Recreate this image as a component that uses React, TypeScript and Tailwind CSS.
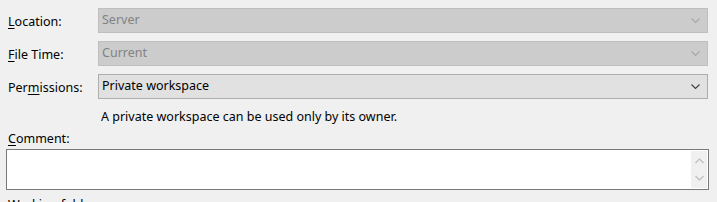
const FONT = "font-['Segoe_UI','Noto_Sans','Open_Sans',sans-serif]";

function Chevron({ disabled }: { disabled?: boolean }) {
  return (
    <svg width="9" height="6" viewBox="0 0 9 6" className="shrink-0">
      <path d="M0.5 0.5 L4.5 4.5 L8.5 0.5" fill="none" stroke={disabled ? "#a6a6a6" : "#404040"} strokeWidth="1.1" />
    </svg>
  );
}

function Combo({ value, disabled }: { value: string; disabled?: boolean }) {
  return (
    <div
      className={
        disabled
          ? "flex h-[25px] items-center justify-between border border-[#bfbfbf] bg-[#cccccc] pl-[3px] pr-[7px] text-[#838383]"
          : "flex h-[25px] items-center justify-between border border-[#adadad] bg-[#e1e1e1] pl-[3px] pr-[7px] text-black"
      }
    >
      <span>{value}</span>
      <Chevron disabled={disabled} />
    </div>
  );
}

function Label({ hot, rest, before }: { hot: string; rest: string; before?: string }) {
  return (
    <span className="mt-[3px]">
      {before}
      <span className="underline underline-offset-2">{hot}</span>
      {rest}
    </span>
  );
}

export default function App() {
  return (
    <div className={`${FONT} h-[202px] w-[717px] overflow-hidden bg-[#f0f0f0] text-[12.5px] text-black`}>
      <div className="grid grid-cols-[90px_610px] items-center gap-y-[8px] pl-[8px] pt-[8px]">
        <Label hot="L" rest="ocation:" />
        <Combo value="Server" disabled />
        <Label hot="F" rest="ile Time:" />
        <Combo value="Current" disabled />
        <Label before="Per" hot="m" rest="issions:" />
        <Combo value="Private workspace" />
      </div>
      <div className="pl-[101px] pt-[9px] leading-[18px]">A private workspace can be used only by its owner.</div>
      <div className="flex pl-[8px] pt-[1px] leading-[18px]">
        <Label hot="C" rest="omment:" />
      </div>
      <div className="ml-[6px] mt-[1px] flex h-[41px] w-[703px] border border-[#7a7a7a] bg-white">
        <div className="flex-1" />
        <div className="my-px mr-px flex w-[16px] flex-col items-center justify-between bg-[#f0f0f0] py-[7px]">
          <svg width="9" height="6" viewBox="0 0 9 6">
            <path d="M0.5 5 L4.5 1 L8.5 5" fill="none" stroke="#c2c2c2" strokeWidth="1.4" />
          </svg>
          <svg width="9" height="6" viewBox="0 0 9 6">
            <path d="M0.5 1 L4.5 5 L8.5 1" fill="none" stroke="#c2c2c2" strokeWidth="1.4" />
          </svg>
        </div>
      </div>
      <div className="flex pl-[8px] pt-[3px] leading-[18px]">
        <Label hot="W" rest="orking folder:" />
      </div>
    </div>
  );
}
